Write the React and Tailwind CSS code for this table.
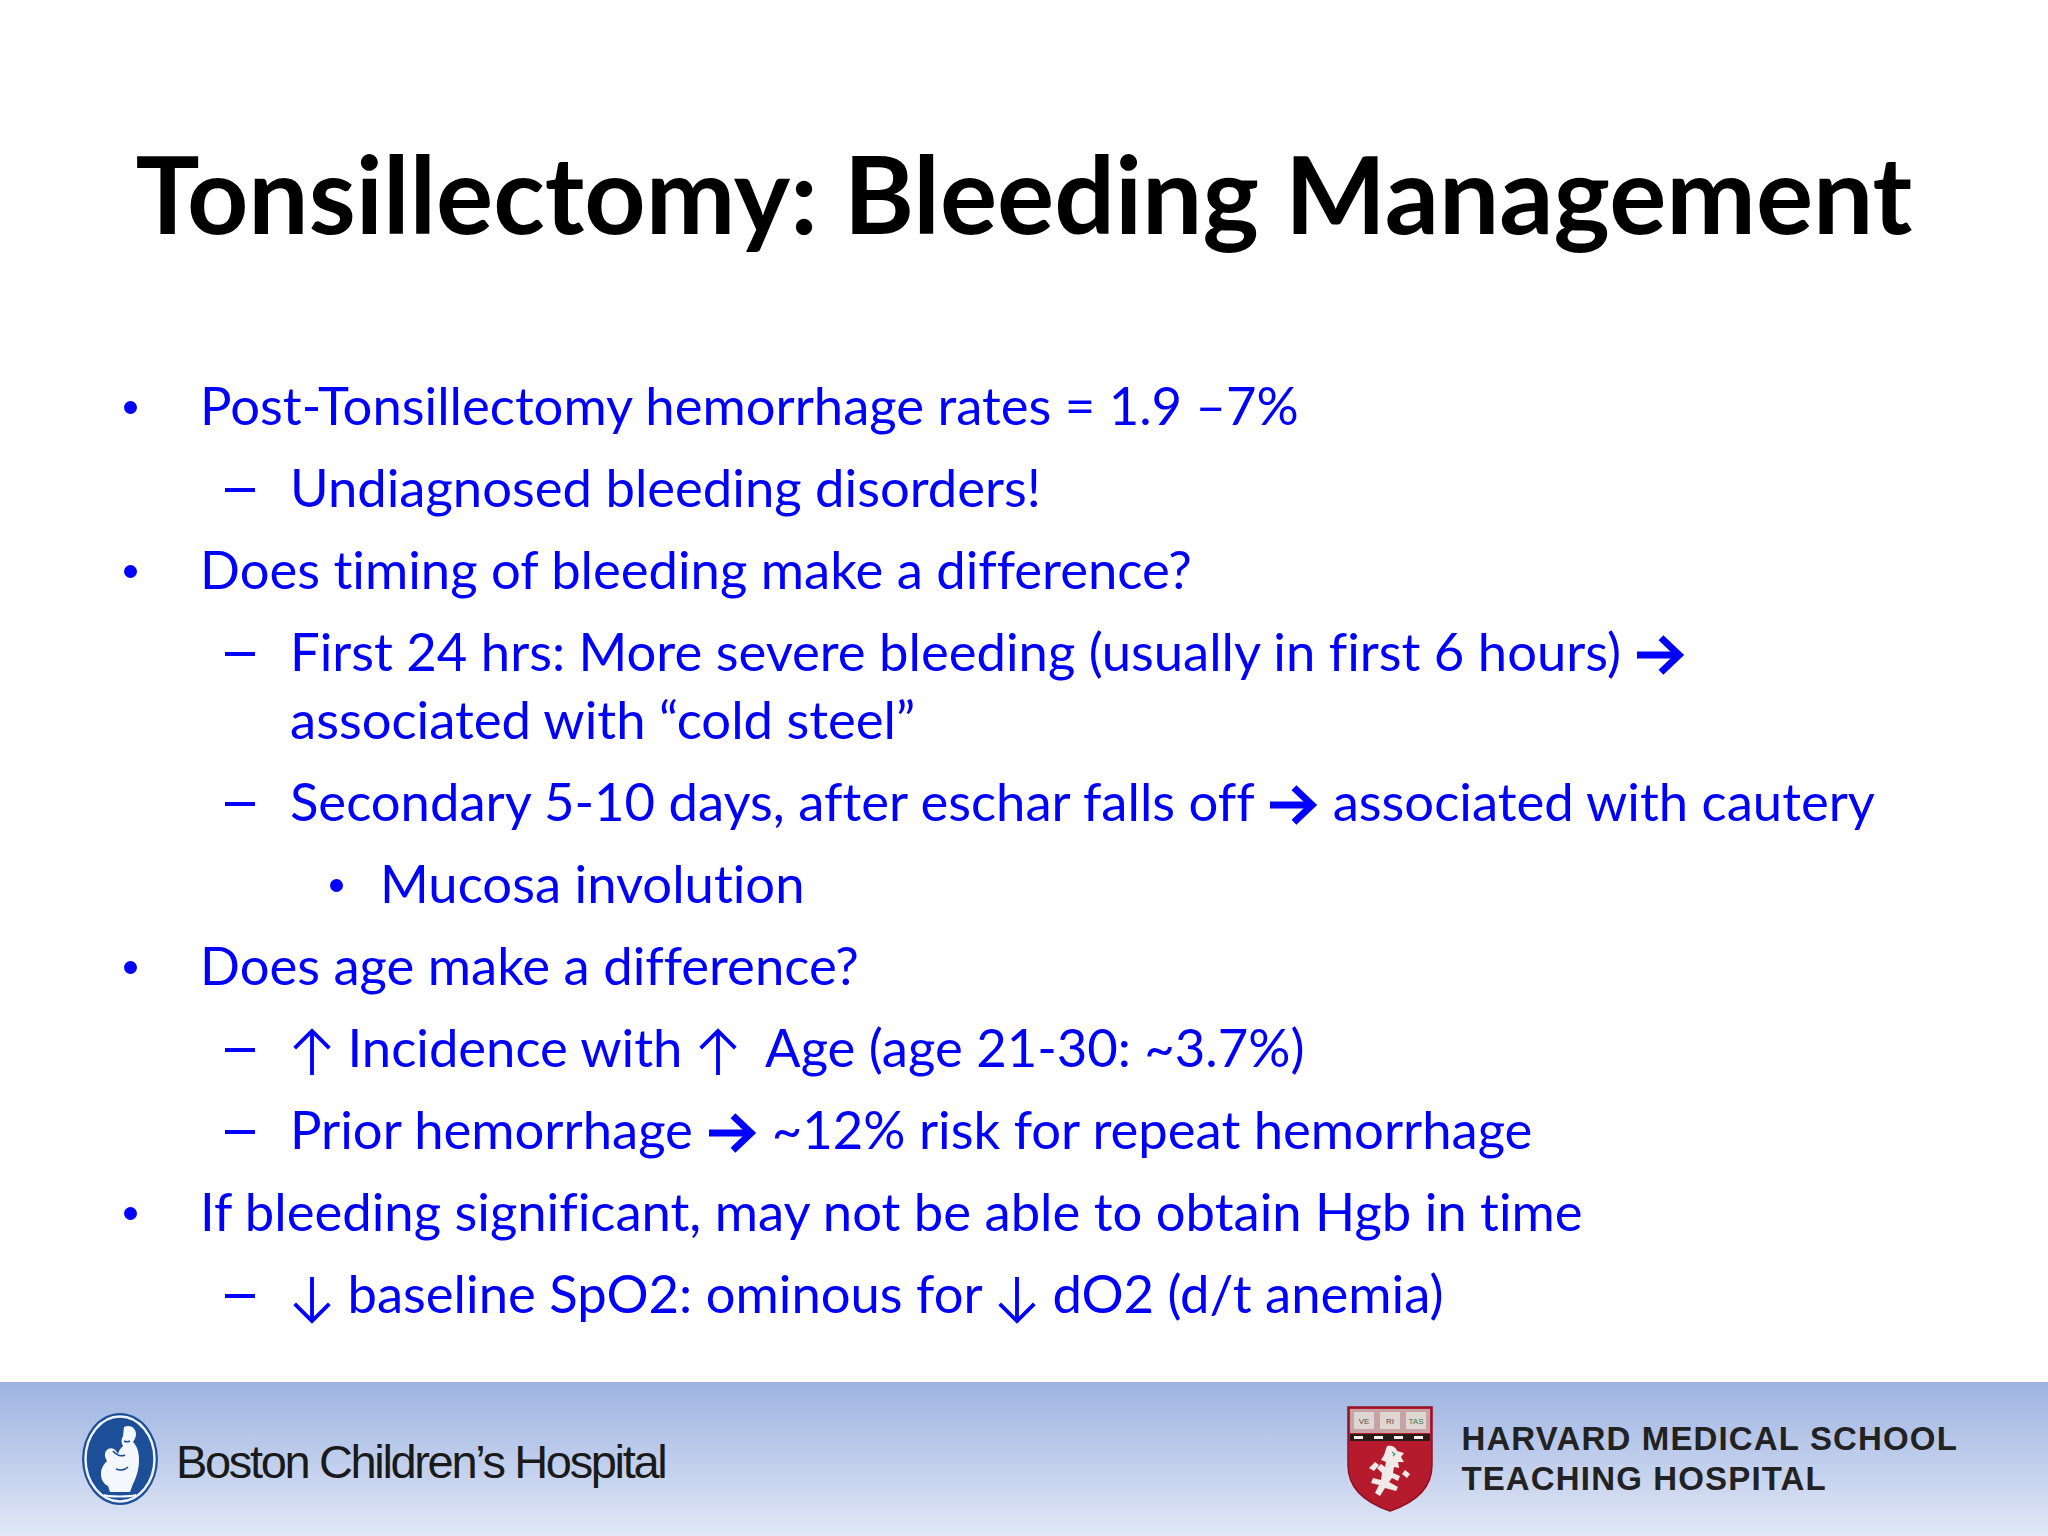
import React from "react";

const Arrow = () => (
  <svg viewBox="0 0 26 24" className="inline-block w-[52px] h-[46px] align-[-7px]" fill="none" stroke="currentColor" strokeWidth="3.6" strokeLinejoin="miter">
    <path d="M1 12h21" />
    <path d="M13.5 3l9.5 9-9.5 9" />
  </svg>
);

const Up = () => (
  <svg viewBox="0 0 22 26" className="inline-block w-[44px] h-[50px] align-[-10px]" fill="none" stroke="currentColor" strokeWidth="2">
    <path d="M11 25V2" />
    <path d="M2 11l9-9 9 9" />
  </svg>
);

const Down = () => (
  <svg viewBox="0 0 22 26" className="inline-block w-[44px] h-[50px] align-[-12px]" fill="none" stroke="currentColor" strokeWidth="2">
    <path d="M11 1v23" />
    <path d="M2 15l9 9 9-9" />
  </svg>
);

const Item = ({ level, children, first }) => {
  const pad = level === 1 ? "pl-[124px]" : level === 2 ? "pl-[225px]" : "pl-[330px]";
  const mark = level === 1 ? "w-[76px]" : level === 2 ? "w-[65px]" : "w-[50px]";
  return (
    <li className={`flex ${pad} ${first ? "" : "mt-[14px]"}`}>
      <span className={`${mark} shrink-0 flex items-center h-[68px]`}>
        {level === 2 ? (
          <span className="block w-[30px] h-[4px] bg-current mt-[6px]" />
        ) : (
          <span className="block w-[13px] h-[13px] rounded-full bg-current mt-[4px]" />
        )}
      </span>
      <span>{children}</span>
    </li>
  );
};

const BostonLogo = () => (
  <svg viewBox="0 0 80 96" className="w-[80px] h-[96px]">
    <ellipse cx="40" cy="48" rx="38" ry="46" fill="#1d4f99" />
    <ellipse cx="40" cy="48" rx="34.5" ry="42.5" fill="none" stroke="#eef3fb" strokeWidth="2.5" />
    <ellipse cx="40" cy="48" rx="31" ry="39" fill="#1d4f99" />
    <path d="M44 16c6-3 12 1 12 7 0 4-2 6-3 8 4 4 6 10 6 18 0 10-3 18-6 24l-3 8H30l-2-6c-4-2-7-6-7-12 0-6 3-10 6-13-2-3-3-7-1-10 3-4 8-3 10 0l2 3c1-4 3-6 5-8-2-3-2-7 0-10z" fill="#f4f7fc" />
    <path d="M33 40c3 4 8 6 12 4M36 58c4 2 9 1 12-2M44 30c2 1 4 1 6 0" fill="none" stroke="#1d4f99" strokeWidth="1.6" />
    <path d="M24 84c5 2 25 2 32 0" fill="none" stroke="#f4f7fc" strokeWidth="2" />
  </svg>
);

const HarvardShield = () => (
  <svg viewBox="0 0 86 106" className="w-[86px] h-[106px]">
    <path d="M1 1h84v58c0 24-18 38-42 46C19 97 1 83 1 59z" fill="#b51a2d" stroke="#8e1020" strokeWidth="1.5" />
    <rect x="3" y="3" width="80" height="24" fill="#c7a3a6" />
    <rect x="7" y="6" width="20" height="17" fill="#ddd6d2" />
    <rect x="33" y="6" width="20" height="17" fill="#ddd6d2" />
    <rect x="59" y="6" width="20" height="17" fill="#ddd6d2" />
    <text x="17" y="18" fontSize="8" textAnchor="middle" fill="#5a4a4a" fontFamily="Liberation Sans, sans-serif">VE</text>
    <text x="43" y="18" fontSize="8" textAnchor="middle" fill="#5a4a4a" fontFamily="Liberation Sans, sans-serif">RI</text>
    <text x="69" y="18" fontSize="8" textAnchor="middle" fill="#3a7a5a" fontFamily="Liberation Sans, sans-serif">TAS</text>
    <rect x="3" y="28" width="80" height="7" fill="#2a1a1a" />
    <rect x="7" y="30" width="9" height="3" fill="#f3eeee" />
    <rect x="27" y="30" width="9" height="3" fill="#f3eeee" />
    <rect x="47" y="30" width="9" height="3" fill="#f3eeee" />
    <rect x="67" y="30" width="9" height="3" fill="#f3eeee" />
    {/* lion rampant */}
    <path d="M40 40c5-1 9 1 10 5l7 2-3 4 3 5-6 0 1 6-5-1-1 6 7 3-2 5-6-3-3 4 9 5-2 4-11-3-5 8-5-3 4-8-8-2 2-5 8 2 1-7-5-5 4-4 4 3 1-5-5-2 3-5z" fill="#f2e9e9" />
    <path d="M22 62l6-6 4 3-5 6zM58 64l5 4-3 4-5-4z" fill="#f2e9e9" />
    <path d="M45 46l3 2-2 2" fill="none" stroke="#3a9a8a" strokeWidth="1.2" />
  </svg>
);

export default function App() {
  return (
    <div className="w-[2048px] h-[1536px] flex flex-col bg-white font-['Lato','Liberation_Sans',sans-serif] [font-variant-ligatures:none] overflow-hidden">
      <div className="flex-1">
        <h1 className="pt-[133px] text-center text-[107px] leading-[120px] font-bold text-black">
          Tonsillectomy: Bleeding Management
        </h1>
        <ul className="mt-[118px] text-[#0000ff] text-[52.6px] leading-[68px]">
          <Item level={1} first>Post-Tonsillectomy hemorrhage rates = 1.9 –7%</Item>
          <Item level={2}>Undiagnosed bleeding disorders!</Item>
          <Item level={1}>Does timing of bleeding make a difference?</Item>
          <Item level={2}>
            First 24 hrs: More severe bleeding (usually in first 6 hours) <Arrow />
            <br />
            associated with “cold steel”
          </Item>
          <Item level={2}>
            Secondary 5-10 days, after eschar falls off <Arrow /> associated with cautery
          </Item>
          <Item level={3}>Mucosa involution</Item>
          <Item level={1}>Does age make a difference?</Item>
          <Item level={2}>
            <Up /> Incidence with <Up />&nbsp; Age (age 21-30: ~3.7%)
          </Item>
          <Item level={2}>
            Prior hemorrhage <Arrow /> ~12% risk for repeat hemorrhage
          </Item>
          <Item level={1}>If bleeding significant, may not be able to obtain Hgb in time</Item>
          <Item level={2}>
            <Down /> baseline SpO2: ominous for <Down /> dO2 (d/t anemia)
          </Item>
        </ul>
      </div>
      <footer className="h-[154px] shrink-0 bg-gradient-to-b from-[#9db3e1] to-[#e2e8f6] flex items-center">
        <div className="ml-[80px] flex items-center">
          <BostonLogo />
          <span className="ml-[16px] mt-[6px] text-[47px] tracking-[-0.05em] text-[#1a1a1a] font-['Liberation_Sans',sans-serif]">
            Boston Children’s Hospital
          </span>
        </div>
        <div className="ml-auto mr-[90px] flex items-center">
          <HarvardShield />
          <div className="ml-[28px] text-[33px] leading-[40px] font-bold tracking-[0.035em] text-[#222] font-['Liberation_Sans',sans-serif]">
            <div>HARVARD MEDICAL SCHOOL</div>
            <div>TEACHING HOSPITAL</div>
          </div>
        </div>
      </footer>
    </div>
  );
}
